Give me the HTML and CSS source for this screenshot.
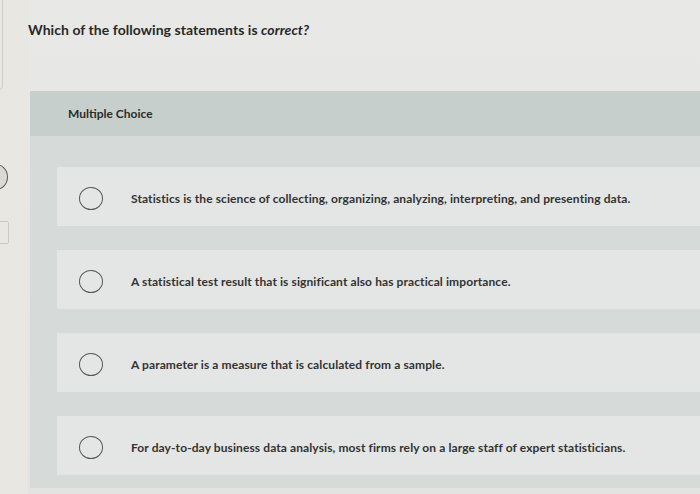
FILE: index.html
```html
<!DOCTYPE html>
<html lang="en">
<head>
<meta charset="utf-8">
<title>Multiple Choice</title>
<link rel="stylesheet" href="styles.css">
</head>
<body>
<div class="screen">
  <div class="gutter">
    <div class="gutter-panel"></div>
    <div class="gutter-button"></div>
    <div class="gutter-box"></div>
  </div>
  <div class="main">
    <p class="question">Which of the following statements is <em>correct?</em></p>
    <section class="panel">
      <div class="panel-head">Multiple Choice</div>
      <div class="options">
        <label class="option"><span class="radio"></span><span class="option-text">Statistics is the science of collecting, organizing, analyzing, interpreting, and presenting data.</span></label>
        <label class="option"><span class="radio"></span><span class="option-text">A statistical test result that is significant also has practical importance.</span></label>
        <label class="option"><span class="radio"></span><span class="option-text">A parameter is a measure that is calculated from a sample.</span></label>
        <label class="option"><span class="radio"></span><span class="option-text">For day-to-day business data analysis, most firms rely on a large staff of expert statisticians.</span></label>
      </div>
    </section>
  </div>
</div>
</body>
</html>
```

FILE: styles.css
```css
* { box-sizing: border-box; }
html, body { margin: 0; padding: 0; }
body {
  width: 700px;
  height: 494px;
  overflow: hidden;
  background: #e4e4e2;
  font-family: Lato, "Open Sans", sans-serif;
  color: #2b2b2b;
}
.screen {
  display: flex;
  width: 700px;
  height: 494px;
  background: linear-gradient(180deg, #e8e8e6 0%, #e3e4e2 100%);
}
.gutter {
  position: relative;
  width: 28px;
  flex: none;
  background: linear-gradient(90deg, #e9e7e2 0%, #e9e7e2 90%, #e6e6e3 100%);
}
.gutter-panel {
  position: absolute;
  left: -8px;
  top: -6px;
  width: 11px;
  height: 96px;
  border: 1px solid #cfcdc8;
  border-radius: 0 0 4px 0;
}
.gutter-button {
  position: absolute;
  left: -16px;
  top: 164px;
  width: 24px;
  height: 26px;
  border: 1.5px solid #5a5a58;
  border-radius: 50%;
  background: #d9dad4;
}
.gutter-box {
  position: absolute;
  left: -6px;
  top: 221px;
  width: 15px;
  height: 23px;
  border: 1px solid #c9c8c3;
  border-radius: 2px;
}
.main {
  flex: 1;
  min-width: 0;
}
.question {
  margin: 0;
  padding: 21px 0 0;
  height: 91px;
  font-size: 14px;
  font-weight: 700;
  letter-spacing: 0.05px;
  color: #282828;
}
.question em { font-weight: 700; }
.panel {
  margin-left: 2px;
  height: 397px;
  background: #d6dad8;
}
.panel-head {
  height: 45px;
  display: flex;
  align-items: center;
  padding-left: 38px;
  background: #c7cfcc;
  font-size: 12px;
  font-weight: 700;
  color: #2c2c2c;
}
.options {
  display: flex;
  flex-direction: column;
  gap: 24px;
  padding: 31px 0 0 27px;
}
.option {
  height: 59px;
  display: flex;
  align-items: center;
  padding-left: 22px;
  padding-top: 4px;
  background: #e3e6e4;
}
.radio {
  flex: none;
  width: 24px;
  height: 23px;
  border: 1.5px solid #575757;
  border-radius: 50%;
  margin-right: 28px;
}
.option-text {
  font-size: 12px;
  font-weight: 700;
  letter-spacing: 0.1px;
  color: #333333;
  white-space: nowrap;
}
```
